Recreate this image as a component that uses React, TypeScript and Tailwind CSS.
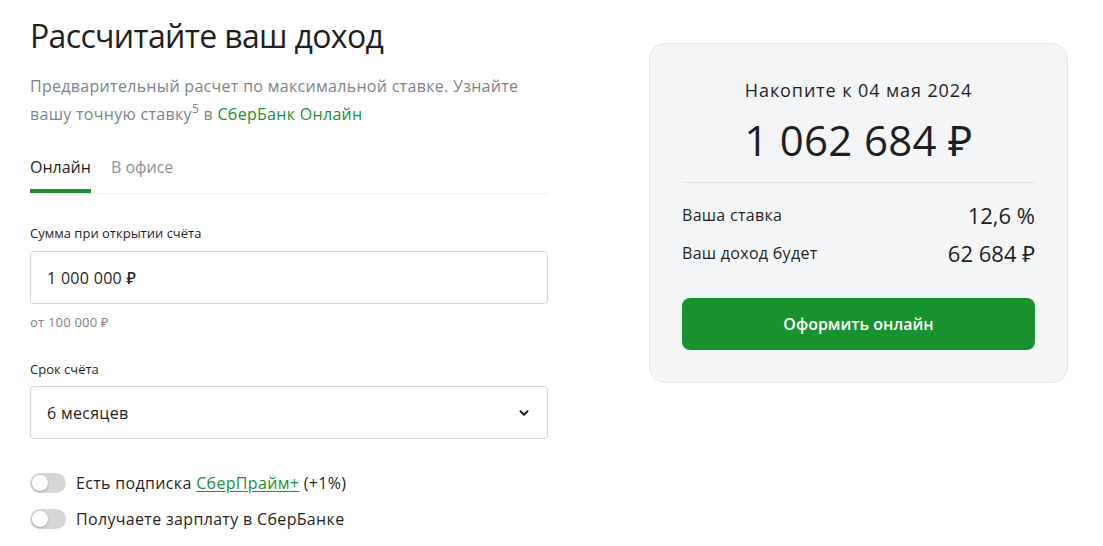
import { ChevronDown } from "lucide-react";

function Toggle({ children }: { children: React.ReactNode }) {
  return (
    <div className="flex items-center h-6">
      <div className="w-9 h-5 rounded-full bg-[#d6d6d6] relative flex-shrink-0">
        <div className="absolute left-0.5 top-0.5 w-4 h-4 rounded-full bg-white shadow-[0_1px_2px_rgba(0,0,0,0.25)]" />
      </div>
      <span className="ml-2.5 text-base tracking-[0.33px] text-[#1f1f22]">{children}</span>
    </div>
  );
}

export default function App() {
  return (
    <div
      className="w-[1103px] h-[546px] bg-white flex pl-[30px] text-[#1f1f22] overflow-hidden"
      style={{ fontFamily: '"Open Sans", "Noto Sans", sans-serif' }}
    >
      <div className="w-[518px] pt-4 flex-shrink-0">
        <h1 className="text-[32px] leading-[40px] font-medium tracking-[-0.65px]">Рассчитайте ваш доход</h1>
        <p className="mt-4 text-base leading-7 tracking-[0.3px] text-[#7d838a]">
          Предварительный расчет по максимальной ставке. Узнайте вашу точную ставку
          <span className="inline-block align-top text-xs leading-[18px]">5</span> в{" "}
          <span className="text-[#1a8f32]">СберБанк Онлайн</span>
        </p>

        <div className="mt-[27px] flex gap-5 border-b border-[#eeeff1]">
          <div className="pb-[10px] border-b-4 border-[#1a8f32] rounded-t-[1px] text-base leading-6 text-[#1f1f22]">
            Онлайн
          </div>
          <div className="pb-[14px] text-base leading-6 text-[#8b9096]">В офисе</div>
        </div>

        <div className="mt-[30px] text-[13px] leading-[18px]">Сумма при открытии счёта</div>
        <div className="mt-[9px] h-[53px] border border-[#d0d7dd] rounded flex items-center px-4 text-base font-medium tracking-[0.3px]">
          1 000 000 ₽
        </div>
        <div className="mt-[10px] text-[13px] leading-4 tracking-[0.2px] text-[#7d838a]">от 100 000 ₽</div>

        <div className="mt-[30px] text-[13px] leading-[18px]">Срок счёта</div>
        <div className="mt-2 h-[53px] border border-[#d0d7dd] rounded flex items-center justify-between pl-4 pr-4 text-base font-medium tracking-[0.3px]">
          <span>6 месяцев</span>
          <ChevronDown className="w-3.5 h-3.5" strokeWidth={3.5} />
        </div>

        <div className="mt-8 flex flex-col gap-3">
          <Toggle>
            Есть подписка <span className="text-[#1a8f32] underline underline-offset-2">СберПрайм+</span> (+1%)
          </Toggle>
          <Toggle>Получаете зарплату в СберБанке</Toggle>
        </div>
      </div>

      <div className="ml-[101px] mt-[43px] w-[419px] h-[340px] rounded-2xl border border-[#e4e6e9] bg-[#f4f5f7] px-8 pt-[34px] pb-8 flex flex-col">
        <div className="text-center text-lg leading-6 tracking-[0.9px]">Накопите к 04 мая 2024</div>
        <div className="mt-[13px] text-center text-[42px] leading-[50px] tracking-[0.3px]">1 062 684 ₽</div>
        <div className="mt-[17px] border-t border-[#dfe1e4]" />
        <div className="mt-5 flex items-center justify-between h-6">
          <span className="text-base tracking-[0.3px]">Ваша ставка</span>
          <span className="text-[22px]">12,6 %</span>
        </div>
        <div className="mt-3.5 flex items-center justify-between h-6">
          <span className="text-base tracking-[0.3px]">Ваш доход будет</span>
          <span className="text-[22px]">62 684 ₽</span>
        </div>
        <button className="mt-auto h-[52px] rounded-lg bg-[#18922f] text-white text-base font-semibold">
          Оформить онлайн
        </button>
      </div>
    </div>
  );
}
